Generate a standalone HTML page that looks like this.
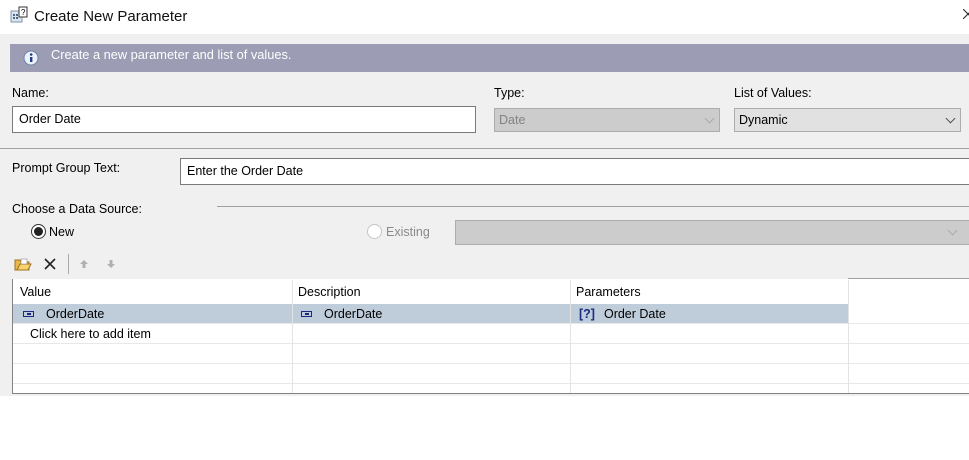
<!DOCTYPE html>
<html><head><style>
*{margin:0;padding:0;box-sizing:border-box}
body{width:969px;height:460px;background:#fff;font-family:"Liberation Sans",sans-serif;font-size:12.5px;color:#000;position:relative;overflow:hidden}
.a{position:absolute}
.lbl{position:absolute;font-size:12.5px;white-space:nowrap}
.inp{position:absolute;background:#fff;border:1px solid #7a7a7a;padding:0 0 0 6px;line-height:23px}
.cb{position:absolute;border:1px solid #adadad;padding-left:4px;line-height:23px}
.chev{position:absolute;right:6px;top:6px;width:7px;height:7px;border-right:1px solid #555;border-bottom:1px solid #555;transform:rotate(45deg)}
.row{position:absolute;left:13px;width:956px;height:20px;border-bottom:1px solid #e8e8e8}
.cell{position:absolute;top:0;height:100%;line-height:20px;white-space:nowrap}
.vline{position:absolute;top:280px;height:113px;width:1px;background:#e3e3e3}
.fld{display:inline-block;width:11px;height:6px;border:1px solid #1a2a80;margin-right:12px;vertical-align:1px;position:relative}
.fld:after{content:"";position:absolute;left:3px;top:1px;width:4px;height:2px;background:#1a2a80}
</style></head><body>
<svg class="a" style="left:10px;top:6px" width="18" height="18" viewBox="0 0 18 18">
<rect x="1" y="5" width="11" height="11" fill="#dbe4ee" stroke="#7f95ad"/>
<g fill="#4a6a8a"><rect x="3" y="8" width="2" height="2"/><rect x="6" y="8" width="2" height="2"/><rect x="3" y="11" width="2" height="2"/><rect x="6" y="11" width="2" height="2"/></g>
<rect x="9" y="1" width="8" height="10" fill="#fff" stroke="#333"/>
<text x="11" y="9" font-size="8" font-family="Liberation Sans" fill="#000">?</text>
</svg>
<div class="lbl" style="left:34px;top:8px;font-size:15px;color:#111">Create New Parameter</div>
<svg class="a" style="left:963px;top:9px" width="10" height="10"><path d="M0 0L10 10M0 10L10 0" stroke="#222" stroke-width="1"/></svg>

<div class="a" style="left:0;top:34px;width:969px;height:362px;background:#f0f0f0"></div>
<div class="a" style="left:10px;top:44px;width:959px;height:28px;background:#9c9cb4"></div>
<svg class="a" style="left:22px;top:49px" width="18" height="18"><circle cx="9" cy="9" r="7" fill="#eef2f8" stroke="#6b84b0"/><rect x="8" y="8" width="2.4" height="5" fill="#1d3f8a"/><circle cx="9.2" cy="5.5" r="1.3" fill="#1d3f8a"/></svg>
<div class="lbl" style="left:51px;top:47px;color:#fff;font-size:12.8px">Create a new parameter and list of values.</div>

<div class="lbl" style="left:12px;top:86px">Name:</div>
<div class="inp" style="left:12px;top:106px;width:464px;height:27px;line-height:25px">Order Date</div>
<div class="lbl" style="left:494px;top:86px">Type:</div>
<div class="cb" style="left:494px;top:108px;width:226px;height:24px;background:#cccccc;color:#838383">Date<div class="chev" style="border-color:#aaa"></div></div>
<div class="lbl" style="left:734px;top:86px">List of Values:</div>
<div class="cb" style="left:734px;top:108px;width:227px;height:24px;background:#e1e1e1">Dynamic<div class="chev"></div></div>

<div class="a" style="left:0;top:148px;width:969px;height:1px;background:#a0a0a0"></div>
<div class="lbl" style="left:12px;top:161px">Prompt Group Text:</div>
<div class="inp" style="left:180px;top:158px;width:800px;height:27px;line-height:25px">Enter the Order Date</div>

<div class="lbl" style="left:12px;top:202px">Choose a Data Source:</div>
<div class="a" style="left:217px;top:206px;width:752px;height:1px;background:#a0a0a0"></div>
<div class="a" style="left:31px;top:224px;width:15px;height:15px;border-radius:50%;border:1px solid #333;background:#fff"></div>
<div class="a" style="left:34px;top:227px;width:9px;height:9px;border-radius:50%;background:#222"></div>
<div class="lbl" style="left:49px;top:225px">New</div>
<div class="a" style="left:367px;top:224px;width:15px;height:15px;border-radius:50%;border:1px solid #c5c5c5;background:#fff"></div>
<div class="lbl" style="left:386px;top:225px;color:#8a8a8a">Existing</div>
<div class="cb" style="left:455px;top:220px;width:520px;height:25px;background:#cccccc"><div class="chev" style="right:18px;border-color:#aaa"></div></div>

<svg class="a" style="left:14px;top:256px" width="18" height="16"><path d="M1 4h5l1 2h8v8H1z" fill="#e8b84a" stroke="#a07020"/><path d="M3 14l3-6h11l-3 6z" fill="#f7d46c" stroke="#a07020"/><rect x="7" y="3" width="6" height="5" fill="#fff" stroke="#888" stroke-width=".6"/></svg>
<svg class="a" style="left:43px;top:257px" width="14" height="14"><path d="M2 2L12 12M2 12L12 2" stroke="#222" stroke-width="1.6"/></svg>
<div class="a" style="left:68px;top:254px;width:1px;height:20px;background:#aaa"></div>
<svg class="a" style="left:79px;top:259px" width="10" height="10"><path d="M5 1L9 5H6.5V9h-3V5H1z" fill="#b0b0b0"/></svg>
<svg class="a" style="left:106px;top:259px" width="10" height="10"><path d="M5 9L9 5H6.5V1h-3V5H1z" fill="#b0b0b0"/></svg>

<div class="a" style="left:12px;top:279px;width:957px;height:115px;background:#fff;border-left:1px solid #828282;border-bottom:1px solid #828282"></div>
<div class="a" style="left:848px;top:278px;width:121px;height:1px;background:#a0a0a0"></div>
<div class="row" style="top:280px;height:24px;border-bottom:none">
<div class="cell" style="left:7px;line-height:24px">Value</div>
<div class="cell" style="left:285px;line-height:24px">Description</div>
<div class="cell" style="left:563px;line-height:24px">Parameters</div></div>
<div class="row" style="top:304px;background:linear-gradient(90deg,#bfcddb 835px,#fff 835px)">
<div class="cell" style="left:10px"><span class="fld"></span>OrderDate</div>
<div class="cell" style="left:288px"><span class="fld"></span>OrderDate</div>
<div class="cell" style="left:566px"><b style="color:#1a2a80;margin-right:9px">[?]</b>Order Date</div></div>
<div class="row" style="top:324px"><div class="cell" style="left:17px">Click here to add item</div></div>
<div class="row" style="top:344px"></div>
<div class="row" style="top:364px"></div>
<div class="vline" style="left:292px"></div>
<div class="vline" style="left:570px"></div>
<div class="vline" style="left:848px"></div>
</body></html>
